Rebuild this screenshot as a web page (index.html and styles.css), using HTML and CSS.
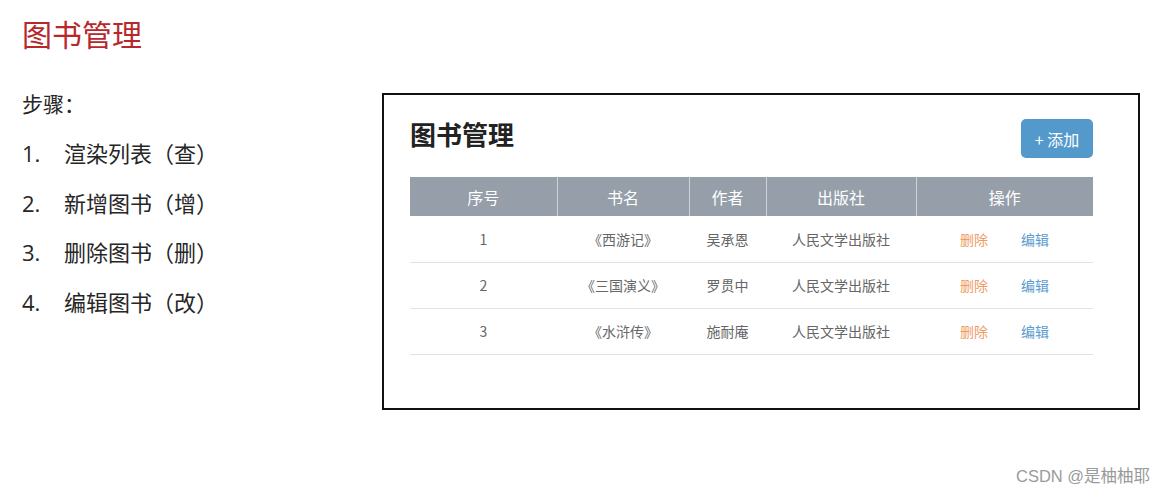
FILE: index.html
```html
<!DOCTYPE html>
<html lang="zh">
<head>
<meta charset="utf-8">
<link rel="stylesheet" href="styles.css">
</head>
<body>
<div class="page">
  <div class="left">
    <h1 class="title">图书管理</h1>
    <p class="steps">步骤：</p>
    <ol class="list">
      <li><span class="num">1.</span><span>渲染列表（查）</span></li>
      <li><span class="num">2.</span><span>新增图书（增）</span></li>
      <li><span class="num">3.</span><span>删除图书（删）</span></li>
      <li><span class="num">4.</span><span>编辑图书（改）</span></li>
    </ol>
  </div>
  <div class="demo">
    <div class="demo-head">
      <h2 class="demo-title">图书管理</h2>
      <button class="add">+ 添加</button>
    </div>
    <table class="books">
      <colgroup>
        <col style="width:147px"><col style="width:132px"><col style="width:77px"><col style="width:150px"><col>
      </colgroup>
      <thead>
        <tr><th>序号</th><th>书名</th><th>作者</th><th>出版社</th><th>操作</th></tr>
      </thead>
      <tbody>
        <tr><td>1</td><td>《西游记》</td><td>吴承恩</td><td>人民文学出版社</td><td><div class="ops"><span class="del">删除</span><span class="edit">编辑</span></div></td></tr>
        <tr><td>2</td><td>《三国演义》</td><td>罗贯中</td><td>人民文学出版社</td><td><div class="ops"><span class="del">删除</span><span class="edit">编辑</span></div></td></tr>
        <tr><td>3</td><td>《水浒传》</td><td>施耐庵</td><td>人民文学出版社</td><td><div class="ops"><span class="del">删除</span><span class="edit">编辑</span></div></td></tr>
      </tbody>
    </table>
  </div>
</div>
<div class="footer">CSDN @是柚柚耶</div>
</body>
</html>
```
FILE: styles.css
```css
* { box-sizing: border-box; }
html, body { margin: 0; padding: 0; background: #fff; }
body {
  width: 1168px;
  height: 494px;
  font-family: "Open Sans", "Noto Sans CJK SC", sans-serif;
  color: #262626;
  position: relative;
  overflow: hidden;
}
.page {
  display: flex;
  padding: 15px 0 0 22px;
}
.left { width: 360px; }
.title {
  margin: 0;
  font-size: 30px;
  font-weight: normal;
  color: #b8282b;
  line-height: 40px;
}
.steps {
  margin: 34px 0 0;
  font-size: 21px;
  line-height: 30px;
}
.list {
  list-style: none;
  margin: 19px 0 0;
  padding: 0;
}
.list li {
  display: flex;
  font-size: 22px;
  line-height: 30px;
  margin-bottom: 19.5px;
}
.list .num { width: 42px; }
.demo {
  margin-top: 78px;
  width: 758px;
  height: 317px;
  border: 2px solid #111;
  padding: 24px 45px 0 26px;
}
.demo-head {
  display: flex;
  justify-content: space-between;
  align-items: flex-start;
  height: 58px;
}
.demo-title {
  margin: 0;
  padding-top: 0;
  font-size: 26px;
  font-weight: bold;
  line-height: 30px;
  color: #222;
  font-family: "Noto Sans CJK SC", sans-serif;
}
.add {
  width: 72px;
  height: 39px;
  border: none;
  border-radius: 5px;
  background: #5399cb;
  color: #fff;
  font-family: "Noto Sans CJK SC", sans-serif;
  font-size: 16px;
  padding: 0;
}
.books {
  width: 683px;
  border-collapse: collapse;
  table-layout: fixed;
  font-family: "Noto Sans CJK SC", sans-serif;
}
.books th {
  background: #959ea9;
  color: #fff;
  font-weight: normal;
  font-size: 16px;
  height: 39px;
  border-left: 1px solid #cfd3d8;
  padding: 0;
}
.books th:first-child { border-left: none; }
.books td {
  text-align: center;
  font-size: 14px;
  color: #666;
  height: 46px;
  border-bottom: 1px solid #e2e2e2;
  padding: 0;
}
.ops {
  display: flex;
  justify-content: center;
  gap: 33px;
}
.del { color: #ee9c63; }
.edit { color: #5b9bd0; }
.footer {
  position: absolute;
  left: 1016px;
  top: 465px;
  font-family: "Liberation Sans", "Noto Sans CJK SC", sans-serif;
  font-size: 16.5px;
  color: #9a9a9a;
  line-height: 22px;
}
```
